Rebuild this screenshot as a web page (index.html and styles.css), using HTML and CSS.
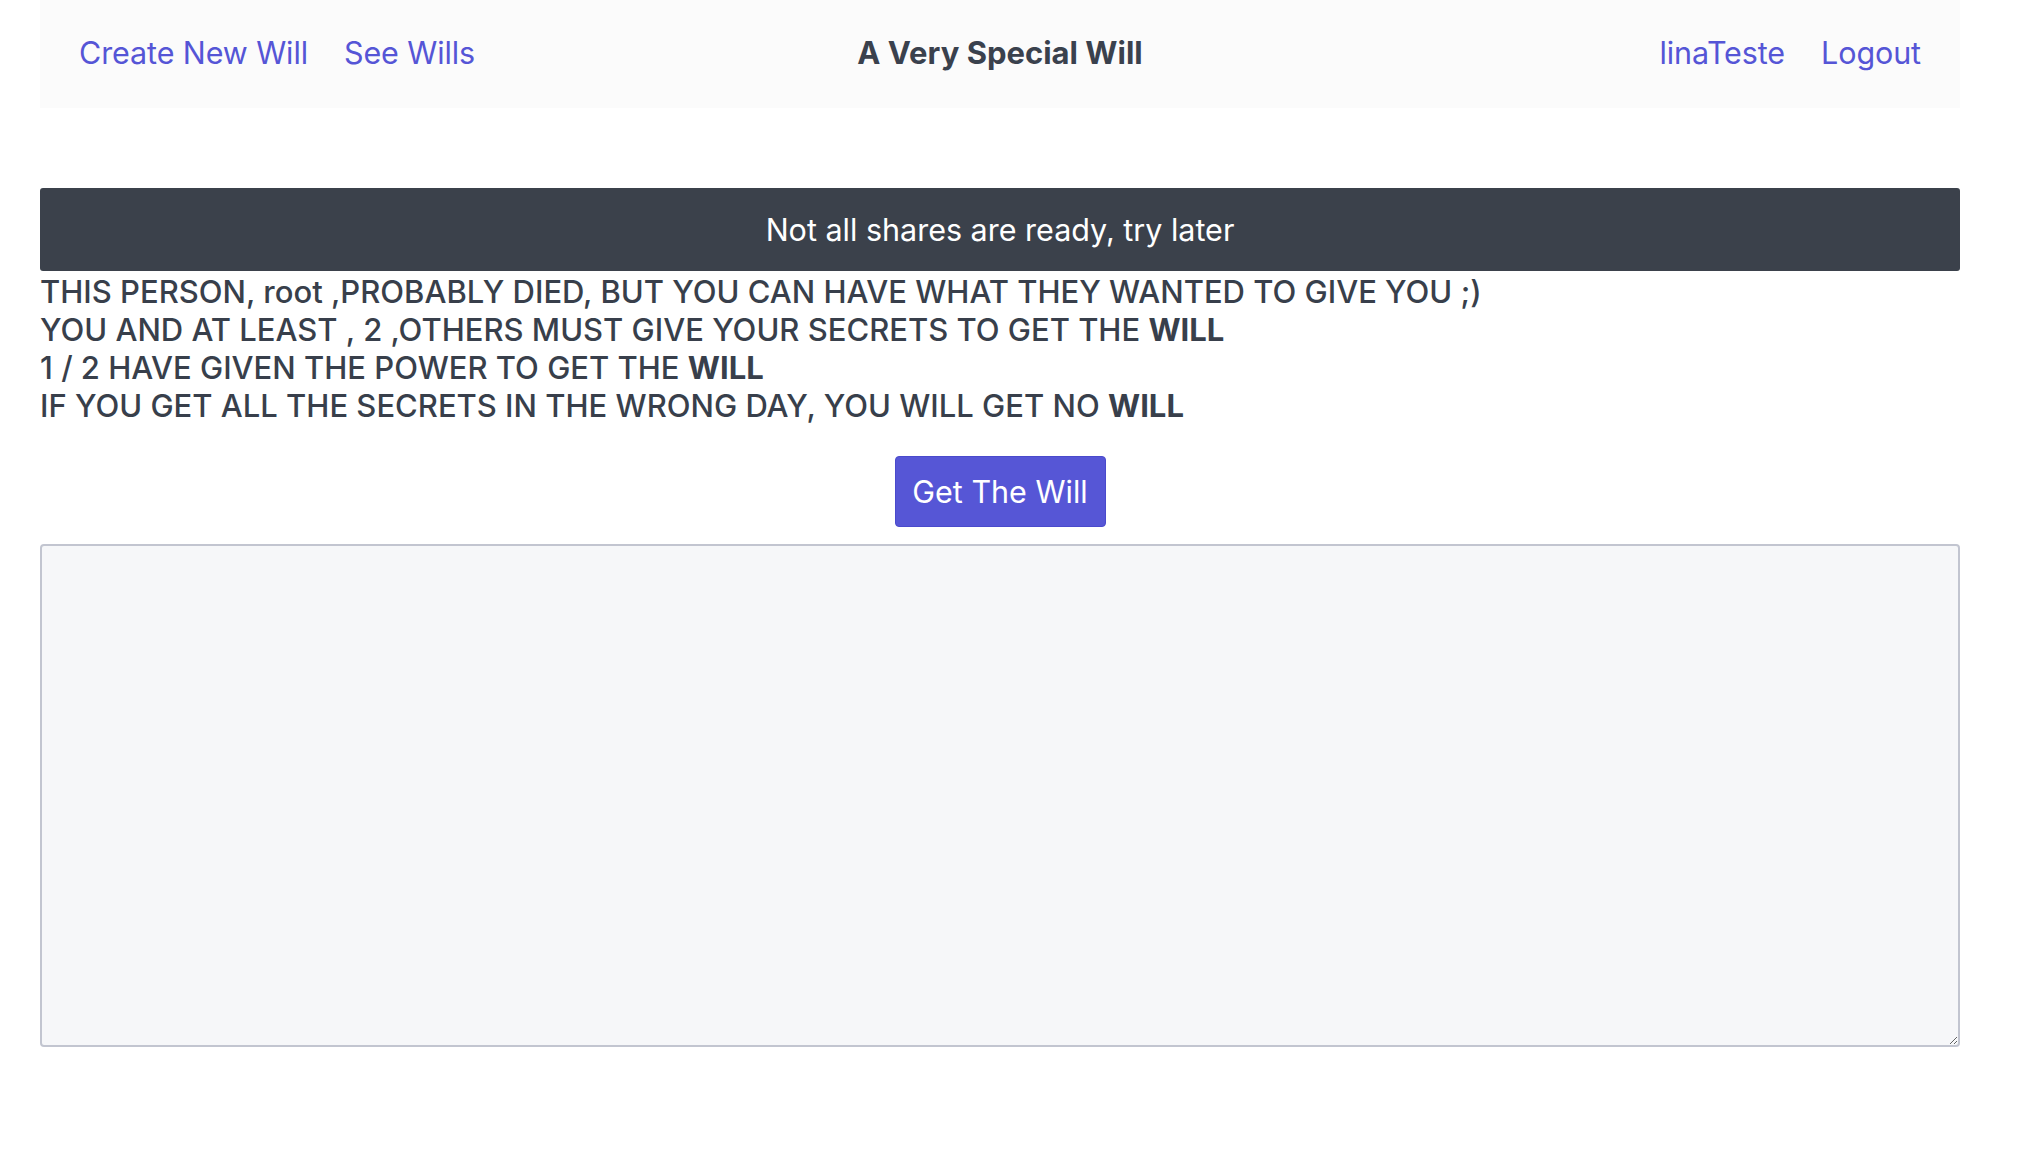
FILE: index.html
```html
<!DOCTYPE html>
<html lang="en">
<head>
<meta charset="utf-8">
<title>A Very Special Will</title>
<link rel="stylesheet" href="styles.css">
</head>
<body>
<div class="page">
  <nav class="navbar">
    <div class="nav-left">
      <a class="nav-link" href="#">Create New Will</a>
      <a class="nav-link" href="#">See Wills</a>
    </div>
    <div class="nav-title">A Very Special Will</div>
    <div class="nav-right">
      <a class="nav-link" href="#">linaTeste</a>
      <a class="nav-link" href="#">Logout</a>
    </div>
  </nav>
  <main class="content">
    <div class="alert">Not all shares are ready, try later</div>
    <div class="info">
      <p>THIS PERSON, root ,PROBABLY DIED, BUT YOU CAN HAVE WHAT THEY WANTED TO GIVE YOU ;)</p>
      <p>YOU AND AT LEAST , 2 ,OTHERS MUST GIVE YOUR SECRETS TO GET THE <b>WILL</b></p>
      <p>1 / 2 HAVE GIVEN THE POWER TO GET THE <b>WILL</b></p>
      <p>IF YOU GET ALL THE SECRETS IN THE WRONG DAY, YOU WILL GET NO <b>WILL</b></p>
    </div>
    <div class="actions">
      <button class="btn" type="button">Get The Will</button>
    </div>
    <textarea class="will-text"></textarea>
  </main>
</div>
</body>
</html>
```
FILE: styles.css
```css
* { box-sizing: border-box; }
html, body { margin: 0; padding: 0; background: #ffffff; }
body {
  font-family: Inter, "Noto Sans", "Liberation Sans", sans-serif;
  color: #3a414d;
}
.page {
  padding: 0 62px 0 40px;
}
.navbar {
  height: 108px;
  background: #fbfbfb;
  display: grid;
  grid-template-columns: 1fr auto 1fr;
  align-items: center;
  padding: 0 39px 3px;
}
.nav-left, .nav-right { display: flex; gap: 36px; }
.nav-right { justify-self: end; }
.nav-link {
  color: #5555d6;
  text-decoration: none;
  font-size: 30.5px;
  letter-spacing: -0.1px;
}
.nav-title {
  font-size: 31px;
  font-weight: 700;
  color: #3a414d;
}
.content { padding-top: 80px; }
.alert {
  height: 83px;
  background: #3b414b;
  border-radius: 3px;
  color: #ffffff;
  font-size: 30.5px;
  display: flex;
  align-items: center;
  justify-content: center;
}
.info {
  font-size: 31px;
  font-weight: 500;
  line-height: 38px;
  padding-top: 2px;
  color: #383f4b;
}
.info p { margin: 0; }
.info b { font-weight: 700; }
.actions {
  display: flex;
  justify-content: center;
  padding: 31px 0 17px;
}
.btn {
  width: 211px;
  height: 71px;
  background: #5656d6;
  border: 1px solid #4a4acc;
  border-radius: 4px;
  color: #ffffff;
  font-family: inherit;
  font-size: 30.5px;
  padding: 0;
}
.will-text {
  display: block;
  width: 100%;
  height: 503px;
  background: #f6f7f9;
  border: 2px solid #c2c5d0;
  border-radius: 4px;
  margin: 0;
}
```
